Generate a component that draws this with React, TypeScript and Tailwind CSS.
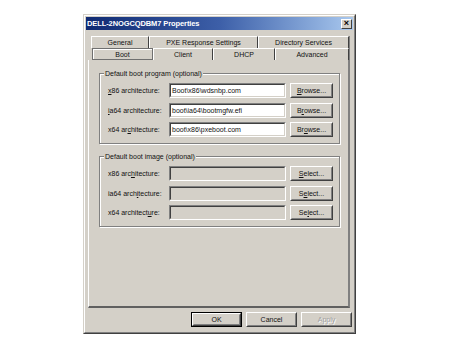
import React from "react";

const font = { fontFamily: '"Liberation Sans", Arial, sans-serif' };

function U({ t, i }: { t: string; i: number }) {
  return (
    <>
      {t.slice(0, i)}
      <span className="underline underline-offset-1">{t[i]}</span>
      {t.slice(i + 1)}
    </>
  );
}

function Btn({ children, w = "w-[43px]", def = false, disabled = false }: { children: React.ReactNode; w?: string; def?: boolean; disabled?: boolean }) {
  return (
    <div className={`${w} h-[15px] ${def ? "border border-black" : ""}`}>
      <div className="w-full h-full border border-t-white border-l-white border-r-[#404040] border-b-[#404040] bg-[#d4d0c8]">
        <div className={`w-full h-full border border-t-[#d4d0c8] border-l-[#d4d0c8] border-r-[#808080] border-b-[#808080] flex items-center justify-center text-[7px] leading-none ${disabled ? "text-[#a0a0a0] [text-shadow:1px_1px_0_white]" : "text-[#111]"}`}>
          {children}
        </div>
      </div>
    </div>
  );
}

function Input({ value, disabled = false }: { value?: string; disabled?: boolean }) {
  return (
    <div className="w-[117px] h-[15px] border border-t-[#808080] border-l-[#808080] border-r-white border-b-white">
      <div className={`w-full h-full border border-t-[#404040] border-l-[#404040] border-r-[#d4d0c8] border-b-[#d4d0c8] ${disabled ? "bg-[#d4d0c8]" : "bg-white"} flex items-center pl-[1px] text-[7px] leading-none text-[#111]`}>
        {value}
      </div>
    </div>
  );
}

function Row({ label, value, btn, disabled }: { label: React.ReactNode; value?: string; btn: React.ReactNode; disabled?: boolean }) {
  return (
    <div className="flex items-center h-[15px]">
      <div className="w-[61px] pl-[9px] box-content text-[7px] leading-none whitespace-nowrap text-[#111]">{label}</div>
      <Input value={value} disabled={disabled} />
      <div className="ml-[4px]">
        <Btn>{btn}</Btn>
      </div>
    </div>
  );
}

function Group({ title, children }: { title: string; children: React.ReactNode }) {
  return (
    <div className="relative w-[241px] h-[71px] border border-[#808080] shadow-[inset_1px_1px_0_white,1px_1px_0_white]">
      <div className="absolute left-[4px] top-[-5px] px-[1px] bg-[#d4d0c8] text-[7px] leading-[9px] text-[#111] whitespace-nowrap">{title}</div>
      <div className="flex flex-col pt-[9px] -ml-[1px]">{children}</div>
    </div>
  );
}

function Tab({ label, w, last = false }: { label: string; w: string; last?: boolean }) {
  return (
    <div className={`${w} h-[12px] border-t border-l border-t-white border-l-white border-r border-r-[#404040] flex items-center justify-center text-[7px] leading-none text-[#111] ${last ? "shadow-[1px_0_0_#808080]" : ""}`}>
      {label}
    </div>
  );
}

export default function App() {
  return (
    <div className="w-[474px] h-[355px] bg-white overflow-hidden" style={font}>
      <div className="ml-[83px] mt-[14px] w-[273px] h-[320px] border border-t-[#d4d0c8] border-l-[#d4d0c8] border-r-[#404040] border-b-[#404040] bg-[#d4d0c8]">
        <div className="w-full h-full border border-t-white border-l-white border-r-[#808080] border-b-[#808080] p-[1px] flex flex-col">
          {/* title bar */}
          <div className="h-[13px] bg-gradient-to-r from-[#102a72] via-[#3d5fa8] to-[#a9c8ee] flex items-center justify-between pl-[1px] pr-[1px]">
            <span className="text-[7.5px] font-bold text-white leading-none tracking-[-0.1px]">DELL-2NOGCQDBM7 Properties</span>
            <div className="w-[11px] h-[10px] bg-[#d4d0c8] border border-t-white border-l-white border-r-[#404040] border-b-[#404040] flex items-center justify-center text-[9px] font-bold leading-none text-black">
              ×
            </div>
          </div>

          {/* tabs */}
          <div className="ml-[2px] mt-[6px] flex flex-col">
            <div className="flex pl-[3px]">
              <Tab label="General" w="w-[58px]" />
              <Tab label="PXE Response Settings" w="w-[109px]" />
              <Tab label="Directory Services" w="w-[91px]" last />
            </div>
            <div className="flex pl-[4px]">
              <div className="w-[61px] h-[12px] border border-[#707070] flex items-center justify-center text-[7px] leading-none text-[#111] shadow-[inset_1px_1px_0_white]">
                Boot
              </div>
              <Tab label="Client" w="w-[60px]" />
              <Tab label="DHCP" w="w-[62px]" />
              <Tab label="Advanced" w="w-[74px]" last />
            </div>
            {/* panel */}
            <div className="w-[262px] h-[248px] border-l border-l-white border-r-2 border-r-[#808080] border-b-2 border-b-[#606060] flex flex-col pl-[10px] pt-[13px]">
              <Group title="Default boot program (optional)">
                <div className="flex flex-col gap-[4.5px]">
                  <Row label={<U t="x86 architecture:" i={0} />} value={"Boot\\x86\\wdsnbp.com"} btn={<U t="Browse..." i={0} />} />
                  <Row label={<U t="ia64 architecture:" i={0} />} value={"boot\\ia64\\bootmgfw.efi"} btn={<U t="Browse..." i={1} />} />
                  <Row label={<U t="x64 architecture:" i={6} />} value={"boot\\x86\\pxeboot.com"} btn={<U t="Browse..." i={2} />} />
                </div>
              </Group>
              <div className="h-[12px]" />
              <Group title="Default boot image (optional)">
                <div className="flex flex-col gap-[4.5px]">
                  <Row disabled label={<U t="x86 architecture:" i={7} />} btn={<U t="Select..." i={0} />} />
                  <Row disabled label={<U t="ia64 architecture:" i={9} />} btn={<U t="Select..." i={1} />} />
                  <Row disabled label={<U t="x64 architecture:" i={13} />} btn={<U t="Select..." i={2} />} />
                </div>
              </Group>
            </div>
          </div>

          {/* bottom buttons */}
          <div className="flex justify-end gap-[4px] mt-[4px] pr-[1px]">
            <Btn w="w-[51px]" def>OK</Btn>
            <Btn w="w-[51px]">Cancel</Btn>
            <Btn w="w-[51px]" disabled>Apply</Btn>
          </div>
        </div>
      </div>
    </div>
  );
}
